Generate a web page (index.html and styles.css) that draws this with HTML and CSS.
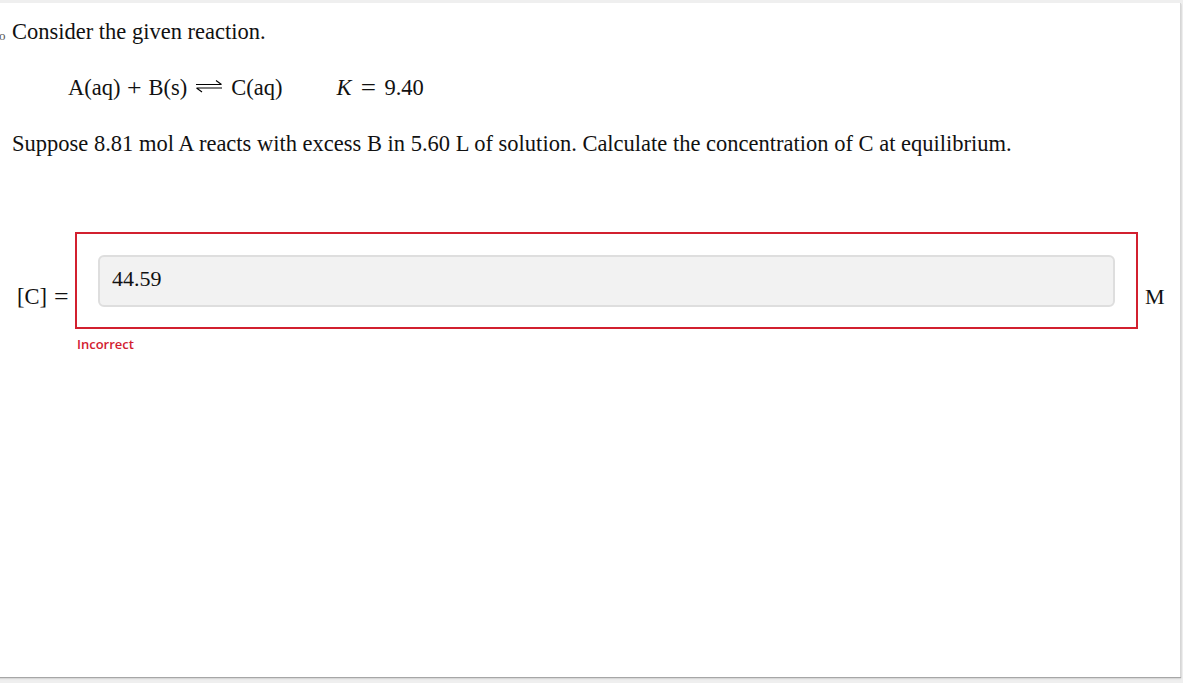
FILE: index.html
```html
<!DOCTYPE html>
<html>
<head>
<meta charset="utf-8">
<link rel="stylesheet" href="styles.css">
</head>
<body>
<div class="card">
  <p class="intro"><span class="marker">o</span>Consider the given reaction.</p>
  <div class="reaction">
    <span class="eq">A(aq)<span class="op">+</span>B(s)<svg class="arrow" width="28" height="14" viewBox="0 0 28 14"><path d="M1 5.5H26.5M26.5 5.5L21 1.5M27 9H1.5M1.5 9L7 13" fill="none" stroke="#000" stroke-width="1.1"/></svg>C(aq)</span>
    <span class="k"><i>K</i><span class="op wide">=</span>9.40</span>
  </div>
  <p class="question">Suppose 8.81 mol A reacts with excess B in 5.60 L of solution. Calculate the concentration of C at equilibrium.</p>
  <div class="answer-row">
    <span class="label">[C]<span class="op">=</span></span>
    <div class="answer-col">
      <div class="answer-box">
        <div class="input">44.59</div>
      </div>
      <div class="feedback">Incorrect</div>
    </div>
    <span class="unit">M</span>
  </div>
</div>
</body>
</html>
```
FILE: styles.css
```css
html, body {
  margin: 0;
  padding: 0;
}
body {
  background: #efefef;
  font-family: "Liberation Serif", "Times New Roman", serif;
  color: #111;
  width: 1183px;
  height: 683px;
  overflow: hidden;
}
.card {
  margin: 3px 0 0 -4px;
  width: 1185px;
  height: 674px;
  background: #fff;
  border-right: 1px solid #d6d6d6;
  box-shadow: 0 1px 1px rgba(0,0,0,0.25), 0 2px 2px rgba(0,0,0,0.08);
  box-sizing: border-box;
  padding-left: 16px;
  padding-top: 1px;
  position: relative;
}
.intro {
  margin: 14px 0 0 0;
  font-size: 22.5px;
  line-height: 28px;
  position: relative;
}
.marker {
  position: absolute;
  left: -13px;
  top: 4px;
  font-size: 13px;
  color: #555;
}
.op {
  margin: 0 0.34em;
  display: inline-block;
  transform: scaleX(1.15);
}
.op.wide {
  margin: 0 0.45em;
  transform: scaleX(1.2);
}
.reaction {
  margin: 28px 0 0 56px;
  font-size: 22.5px;
  line-height: 28px;
  display: flex;
  gap: 54px;
}
.arrow {
  vertical-align: 2px;
  margin: 0 8px;
}
.question {
  margin: 28px 0 0 0;
  font-size: 22.5px;
  line-height: 28px;
}
.answer-row {
  margin-top: 74px;
  display: flex;
  align-items: flex-start;
}
.label {
  font-size: 22.5px;
  margin: 52px 0 0 5px;
  width: 58px;
}
.label .op {
  margin: 0 0 0 0.35em;
}
.answer-col {
  display: flex;
  flex-direction: column;
}
.answer-box {
  width: 1063px;
  height: 97px;
  border: 2px solid #d2202f;
  box-sizing: border-box;
  padding: 21px 21px 0 21px;
}
.input {
  height: 52px;
  background: #f2f2f2;
  border: 2px solid #dedede;
  border-radius: 6px;
  box-sizing: border-box;
  padding: 10px 0 0 12px;
  font-size: 22px;
  line-height: 24px;
}
.feedback {
  margin: 6px 0 0 2px;
  font-family: "Open Sans", sans-serif;
  font-weight: 600;
  font-size: 13px;
  color: #d2202f;
}
.unit {
  font-size: 22px;
  margin: 52px 0 0 7px;
}
```
